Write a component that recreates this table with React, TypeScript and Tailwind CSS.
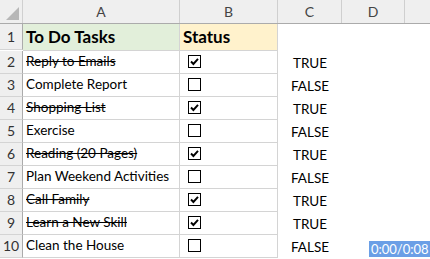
import React from 'react'

type Task = { name: string; done: boolean }

const tasks: Task[] = [
  { name: 'Reply to Emails', done: true },
  { name: 'Complete Report', done: false },
  { name: 'Shopping List', done: true },
  { name: 'Exercise', done: false },
  { name: 'Reading (20 Pages)', done: true },
  { name: 'Plan Weekend Activities', done: false },
  { name: 'Call Family', done: true },
  { name: 'Learn a New Skill', done: true },
  { name: 'Clean the House', done: false },
]

const cols = 'grid grid-cols-[23px_157px_98px_64px_63px_25px]'

function CheckBox({ checked }: { checked: boolean }) {
  return (
    <svg width="13" height="13" viewBox="0 0 13 13" className="block">
      <rect x="0.5" y="0.5" width="12" height="12" fill="white" stroke="#000" />
      {checked && (
        <path d="M3 6.5 L5.4 9 L10 3.8" fill="none" stroke="#000" strokeWidth="1.9" />
      )}
    </svg>
  )
}

function RowHead({ n, h }: { n: number; h: string }) {
  return (
    <div
      className={`${h} flex items-center justify-center bg-[#efefef] border-r border-b border-r-[#ababab] border-b-[#d4d4d4] text-[14px] text-[#333]`}
    >
      {n}
    </div>
  )
}

export default function App() {
  return (
    <div className="relative w-[430px] h-[259px] overflow-hidden bg-white font-['Lato','Liberation_Sans',sans-serif] text-black whitespace-nowrap">
      {/* column letters */}
      <div className={`${cols} h-6 bg-[#efefef] border-b border-[#ababab] text-[14px] text-[#444]`}>
        <div className="relative border-r border-[#d0d0d0]">
          <svg width="13" height="13" className="absolute right-[3px] bottom-[3px]">
            <polygon points="13,0 13,13 0,13" fill="#b7b7b7" />
          </svg>
        </div>
        <div className="flex items-center justify-center border-r border-[#cfcfcf]">A</div>
        <div className="flex items-center justify-center border-r border-[#cfcfcf]">B</div>
        <div className="flex items-center justify-center border-r border-[#cfcfcf]">C</div>
        <div className="flex items-center justify-center border-r border-[#cfcfcf]">D</div>
        <div />
      </div>

      {/* header row */}
      <div className={cols}>
        <RowHead n={1} h="h-[26px]" />
        <div className="flex items-center pl-[3px] bg-[#e2efda] border-r border-b border-[#d4d4d4] text-[17px] font-bold">
          To Do Tasks
        </div>
        <div className="flex items-center pl-[3px] bg-[#fff2cc] border-r border-b border-[#d4d4d4] text-[17px] font-bold">
          Status
        </div>
        <div />
        <div />
        <div />
      </div>

      {tasks.map((t, i) => (
        <div key={t.name} className={`${cols} text-[13.5px]`}>
          <RowHead n={i + 2} h="h-[23px]" />
          <div
            className={`flex items-center pl-[3px] border-r border-b border-[#d4d4d4] ${t.done ? 'line-through' : ''}`}
          >
            {t.name}
          </div>
          <div className="flex items-center pl-2 border-r border-b border-[#d4d4d4]">
            <CheckBox checked={t.done} />
          </div>
          <div className="flex items-center justify-center pt-[2px]">{t.done ? 'TRUE' : 'FALSE'}</div>
          <div />
          <div />
        </div>
      ))}

      {/* media time overlay */}
      <div className="absolute left-[369px] top-[241px] w-[61px] h-[16px] bg-[#6b9fe6] text-white text-[13px] leading-[16px] pl-[2px]">
        0:00/0:08
      </div>
    </div>
  )
}
